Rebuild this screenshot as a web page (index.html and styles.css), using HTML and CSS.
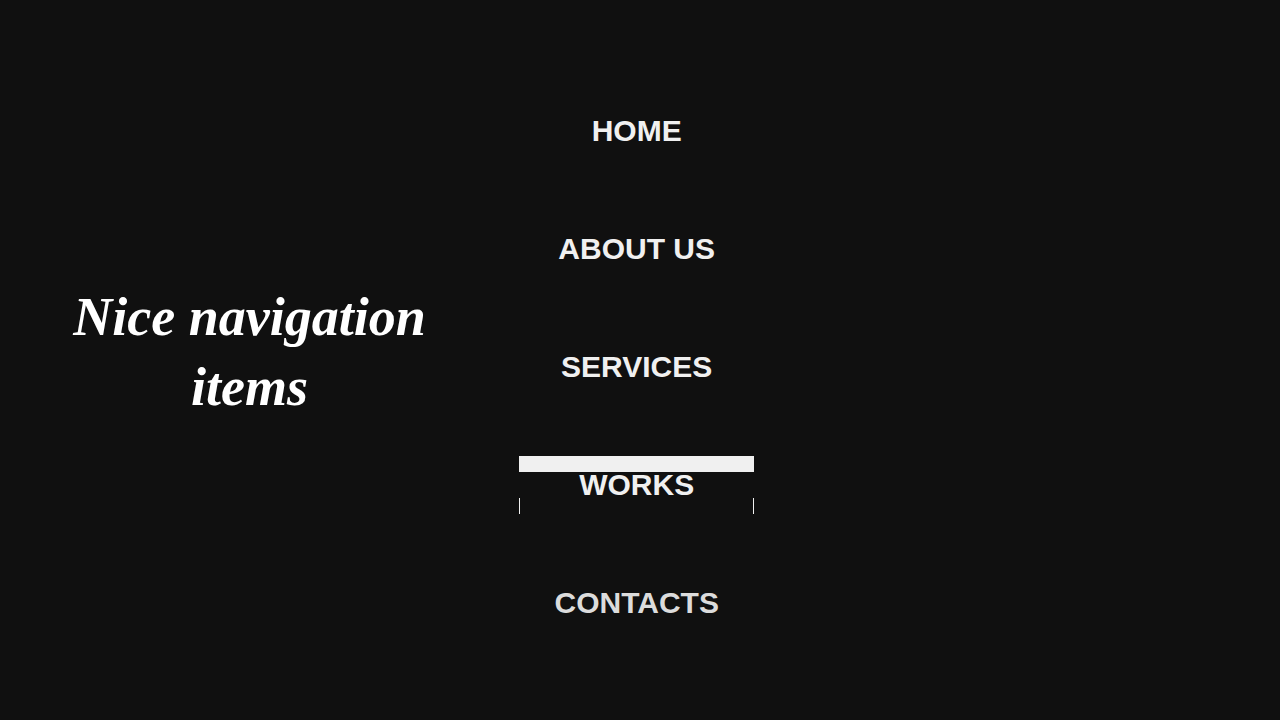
FILE: index.html
```html
<!DOCTYPE html>
<html lang="en">
<head>
    <meta charset="UTF-8">
    <meta name="viewport" content="width=device-width, initial-scale=1.0">
    <title>Navigation</title>
    <link rel="stylesheet" href="styles.css">
</head>
<body>
    <h1 class="caption">Nice navigation items</h1>
    <nav class="menu">
        <ul>
            <li><a href="#home">Home</a></li>
            <li><a href="#about">About us</a></li>
            <li><a href="#services">Services</a></li>
            <li><a href="#works" class="active">Works</a></li>
            <li><a href="#contacts" class="muted">Contacts</a></li>
        </ul>
    </nav>
</body>
</html>
```

FILE: styles.css
```css
*,
*::before,
*::after {
    box-sizing: border-box;
    margin: 0;
    padding: 0;
}

body {
    min-height: 100vh;
    display: grid;
    grid-template-columns: 39% auto 1fr;
    column-gap: 20px;
    align-items: center;
    padding-top: 14px;
    background: #101010;
    color: #f0f0f0;
    font-family: "Liberation Sans", Arial, sans-serif;
}

.caption {
    padding: 0 56px 30px;
    text-align: center;
    color: #ffffff;
    font-family: "Lucida Handwriting", "Brush Script MT", cursive;
    font-size: 54px;
    font-style: italic;
    font-weight: bold;
    line-height: 70px;
}

.menu ul {
    display: flex;
    flex-direction: column;
    gap: 60px;
    list-style: none;
}

.menu a {
    display: block;
    position: relative;
    width: 235px;
    line-height: 58px;
    color: #f0f0f0;
    font-size: 30px;
    font-weight: bold;
    text-align: center;
    text-decoration: none;
    text-transform: uppercase;
}

.menu .muted {
    color: #dcdcdc;
}

.menu .active::before {
    content: "";
    position: absolute;
    top: 0;
    left: 0;
    width: 100%;
    height: 16px;
    background: #f0f0f0;
}

/* side lines at the bottom corners */
.menu .active::after {
    content: "";
    position: absolute;
    bottom: 0;
    left: 0;
    width: 100%;
    height: 16px;
    border: solid #f0f0f0;
    border-width: 0 1px;
}
```
